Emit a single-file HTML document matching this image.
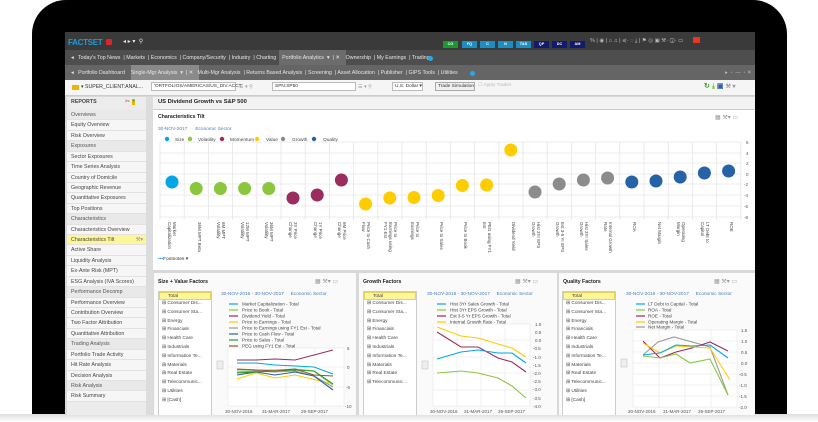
<!DOCTYPE html><html><head><meta charset="utf-8"><style>
*{margin:0;padding:0;box-sizing:border-box}
body{width:818px;height:422px;overflow:hidden;background:#fff;font-family:"Liberation Sans",sans-serif;position:relative}
.a{position:absolute;white-space:nowrap}
.t{font-size:5.2px;color:#333}
.w{color:#e6e6e6;font-size:5.3px}
.side div{height:10.43px;line-height:10.43px;font-size:5.3px;color:#444;padding-left:4px;border-bottom:1px solid #e2e2e2;background:#f6f6f6}
.side div.h{background:#e9e9e9;color:#555}
.side div.sel{background:#fdf59a}
.lst{position:absolute;background:#fff;border:1px solid #ccc}
.lst div{height:8.8px;line-height:8.8px;font-size:4.8px;color:#444;padding-left:3px}
.lst div.tot{background:#fdf59a;border:1px solid #e3d35a;padding-left:8px;height:8px;line-height:7px}
.pl{font-size:5.2px;font-weight:bold;color:#222}
.bl{color:#4a7cc0;font-size:4.8px}
.btn{position:absolute;top:41px;height:7px;width:15px;color:#fff;font-size:3.8px;text-align:center;line-height:7px;font-weight:bold}
</style></head><body>
<div class="a" style="left:32px;top:0;width:755px;height:416px;background:#000;border-radius:34px 34px 0 0"></div>
<div class="a" style="left:0;top:414px;width:818px;height:8px;background:linear-gradient(#ddd,#fff)"></div>
<div class="a" style="left:65px;top:32px;width:690px;height:383px;background:#d8d8d8;overflow:hidden">
 <div class="a" style="left:0;top:0;width:690px;height:18px;background:#3a3a3a"></div>
 <div class="a" style="left:3px;top:6px;font-size:8px;font-weight:bold;color:#1e9bd7;letter-spacing:-0.3px">FACTSET</div>
 <div class="a" style="left:41px;top:7px;width:6px;height:6px;background:#d9262c;border-radius:1px"></div>
 <div class="a w" style="left:58px;top:6px;font-size:6px">◂ ▸ ▾ &nbsp;⚲</div>
 <div class="a w" style="left:525px;top:6px;font-size:5.5px;color:#bbb">% | ◉ | ⌂ ♫ | ⋞· ◌ ⤓ | ⚑ ◎ ▣ ⚒· ⓘ· ▭</div>
 <div class="a" style="left:628px;top:5px;width:7px;height:6px;background:#e32;"></div>
 <div class="a" style="left:0;top:18px;width:690px;height:15px;background:#4e4e4e"></div>
 <div class="a" style="left:214px;top:18px;width:67px;height:15px;background:#6c6c6c"></div>
 <div class="a w" style="left:6px;top:23px">◂ &nbsp; Today's Top News &nbsp;| Markets &nbsp;| Economics &nbsp;| Company/Security &nbsp;| Industry &nbsp;| Charting &nbsp;&nbsp; Portfolio Analytics &nbsp;▾ &nbsp;| ✕ &nbsp;&nbsp; Ownership &nbsp;| My Earnings &nbsp;| Trading</div>
 <div class="a" style="left:363px;top:24px;width:5px;height:5px;border-radius:50%;background:#2aa7ea"></div>
 <div class="a" style="left:0;top:33px;width:690px;height:15px;background:#656565"></div>
 <div class="a" style="left:66px;top:33px;width:68px;height:15px;background:#8a8a8a"></div>
 <div class="a w" style="left:6px;top:38px">◂ &nbsp; Portfolio Dashboard &nbsp;&nbsp; Single-Mgr Analysis &nbsp;▾ &nbsp;| ✕ &nbsp; Multi-Mgr Analysis &nbsp;| Returns Based Analysis &nbsp;| Screening &nbsp;| Asset Allocation &nbsp;| Publisher &nbsp;| GIPS Tools &nbsp;| Utilities</div>
 <div class="a" style="left:405px;top:39px;width:5px;height:5px;border-radius:50%;background:#2aa7ea"></div>
 <div class="a w" style="left:660px;top:38px;color:#bbb">▸ &nbsp;▫ &nbsp;— &nbsp;▫ ✕</div>
 <div class="a" style="left:0;top:48px;width:690px;height:16px;background:#f5f5f5;border-bottom:1px solid #ccc"></div>
 <div class="a" style="left:7px;top:53px;width:7px;height:5px;background:#f0b400"></div>
 <div class="a t" style="left:16px;top:52px">▾ SUPER_CLIENT:ANAL...</div>
 <div class="a t" style="left:86px;top:50px;width:85px;height:9px;border:1px solid #bbb;background:#fff;padding:1px 2px;font-size:4.8px">'ORTFOLIOS/AMERICAS/US_DIV.ACCT</div>
 <div class="a t" style="left:174px;top:52px;color:#999">☰ ▾ ⚲</div>
 <div class="a t" style="left:207px;top:50px;width:84px;height:9px;border:1px solid #bbb;background:#fff;padding:1px 2px;font-size:4.8px">SPN:SP50</div>
 <div class="a t" style="left:293px;top:52px;color:#999">☰ ▾ ⚲</div>
 <div class="a t" style="left:327px;top:50px;width:31px;height:9px;border:1px solid #bbb;background:#fff;padding:1px 2px;font-size:4.8px">U.S. Dollar ▾</div>
 <div class="a t" style="left:370px;top:50px;width:40px;height:9px;border:1px solid #aaa;background:#f0f0f0;padding:1px 2px;font-size:4.8px">Trade Simulation</div>
 <div class="a t" style="left:413px;top:51px;color:#bbb;font-size:4.8px">☐ Apply Trades</div>
 <div class="a" style="left:639px;top:50px;font-size:7px;color:#3a9a2a;font-weight:bold">↻ <span style="color:#7cb82f">⤓</span> <span style="color:#2d5fa6">▣</span> <span style="color:#999;font-size:6px">⚒ ▾</span></div>
 <div class="a" style="left:2px;top:65px;width:79px;height:318px;background:#ececec"></div>
 <div class="a" style="left:81px;top:65px;width:7px;height:318px;background:#dcdcdc"></div>
 <div class="a" style="left:6px;top:67px;font-size:5.3px;color:#444;font-weight:bold">REPORTS</div>
 <div class="a" style="left:60px;top:66px;font-size:6px;color:#c44">✂ <span style="background:#e8b800;color:#3a3">+</span></div>
 <div class="a side" style="left:2px;top:78px;width:79px">
  <div class="h">Overviews</div><div>Equity Overview</div><div>Risk Overview</div>
  <div class="h">Exposures</div><div>Sector Exposures</div><div>Time Series Analysis</div><div>Country of Domicile</div><div>Geographic Revenue</div><div>Quantitative Exposures</div><div>Top Positions</div>
  <div class="h">Characteristics</div><div>Characteristics Overview</div><div class="sel">Characteristics Tilt <span style="float:right;padding-right:3px;color:#999">⚒▾</span></div><div>Active Share</div><div>Liquidity Analysis</div><div>Ex-Ante Risk (MPT)</div><div>ESG Analysis (IVA Scores)</div>
  <div class="h">Performance Decomp</div><div>Performance Overview</div><div>Contribution Overview</div><div>Two Factor Attribution</div><div>Quantitative Attribution</div>
  <div class="h">Trading Analysis</div><div>Portfolio Trade Activity</div><div>Hit Rate Analysis</div><div>Decision Analysis</div>
  <div class="h">Risk Analysis</div><div>Risk Summary</div>
 </div>
 <div class="a" style="left:88px;top:65px;width:602px;height:13px;background:#f2f2f2;border-bottom:1px solid #ccc"></div>
 <div class="a pl" style="left:93px;top:67px;font-size:5.8px">US Dividend Growth vs S&amp;P 500</div>
 <div class="a" style="left:88px;top:78px;width:602px;height:160px;background:#fff"></div>
 <div class="a pl" style="left:93px;top:82px">Characteristics Tilt</div>
 <div class="a bl" style="left:93px;top:95px">30-NOV-2017 &nbsp;&nbsp;&nbsp;&nbsp; Economic Sector</div>
 <div class="a t" style="left:650px;top:82px;color:#999;font-size:6px">▦ ⚒▾ ▭</div>
 <div class="a t" style="left:93px;top:225px;font-size:4.8px"><span style="color:#2a8ae0">•••</span>Footnotes ▾</div>
 <div class="a" style="left:89px;top:241px;width:202px;height:142px;background:#fafafa"></div>
 <div class="a" style="left:294px;top:241px;width:198px;height:142px;background:#fafafa"></div>
 <div class="a" style="left:494px;top:241px;width:196px;height:142px;background:#fafafa"></div>
 <div class="a pl" style="left:93px;top:247px">Size + Value Factors</div>
 <div class="a pl" style="left:298px;top:247px">Growth Factors</div>
 <div class="a pl" style="left:498px;top:247px">Quality Factors</div>
 <div class="a t" style="left:250px;top:246px;color:#999;font-size:6px">▦ ⚒▾ ▭</div>
 <div class="a t" style="left:450px;top:246px;color:#999;font-size:6px">▦ ⚒▾ ▭</div>
 <div class="a t" style="left:649px;top:246px;color:#999;font-size:6px">▦ ⚒▾ ▭</div>
 <div class="a bl" style="left:156px;top:260px">30-NOV-2016 - 30-NOV-2017 &nbsp;&nbsp;&nbsp; Economic Sector</div>
 <div class="a bl" style="left:362px;top:260px">30-NOV-2016 - 30-NOV-2017 &nbsp;&nbsp;&nbsp; Economic Sector</div>
 <div class="a bl" style="left:561px;top:260px">30-NOV-2016 - 30-NOV-2017 &nbsp;&nbsp;&nbsp; Economic Sector</div>
 <div class="lst" style="left:93px;top:259px;width:54px;height:125px"><div class="tot">Total</div><div>⊞ Consumer Dis...</div><div>⊞ Consumer Sta...</div><div>⊞ Energy</div><div>⊞ Financials</div><div>⊞ Health Care</div><div>⊞ Industrials</div><div>⊞ Information Te...</div><div>⊞ Materials</div><div>⊞ Real Estate</div><div>⊞ Telecommunic...</div><div>⊞ Utilities</div><div>⊞ [Cash]</div></div>
 <div class="lst" style="left:298px;top:259px;width:54px;height:125px"><div class="tot">Total</div><div>⊞ Consumer Dis...</div><div>⊞ Consumer Sta...</div><div>⊞ Energy</div><div>⊞ Financials</div><div>⊞ Health Care</div><div>⊞ Industrials</div><div>⊞ Information Te...</div><div>⊞ Materials</div><div>⊞ Real Estate</div><div>⊞ Telecommunic...</div></div>
 <div class="lst" style="left:497px;top:259px;width:54px;height:125px"><div class="tot">Total</div><div>⊞ Consumer Dis...</div><div>⊞ Consumer Sta...</div><div>⊞ Energy</div><div>⊞ Financials</div><div>⊞ Health Care</div><div>⊞ Industrials</div><div>⊞ Information Te...</div><div>⊞ Materials</div><div>⊞ Real Estate</div><div>⊞ Telecommunic...</div><div>⊞ Utilities</div><div>⊞ [Cash]</div></div>
</div>
<svg class="a" style="left:0;top:0" width="818" height="422" font-family="Liberation Sans,sans-serif">
 <g font-size="4.8" fill="#444">
  <circle cx="167" cy="139" r="2.2" fill="#00a6e8"/><text x="175" y="141">Size</text>
  <circle cx="190" cy="139" r="2.2" fill="#8cc63f"/><text x="198" y="141">Volatility</text>
  <circle cx="222" cy="139" r="2.2" fill="#9b2c5e"/><text x="230" y="141">Momentum</text>
  <circle cx="257" cy="139" r="2.2" fill="#ffcc00"/><text x="266" y="141">Value</text>
  <circle cx="283" cy="139" r="2.2" fill="#8c8c8c"/><text x="292" y="141">Growth</text>
  <circle cx="314" cy="139" r="2.2" fill="#2563a6"/><text x="323" y="141">Quality</text>
 </g>
 <g stroke="#e6e6e6" stroke-width="0.8">
  <path d="M160 142H742M160 153H742M160 163H742M160 174H742M160 184H742M160 195H742M160 206H742M160 217H742"/>
  <path d="M160 142V220M184.2 142V220M208.4 142V220M232.6 142V220M256.8 142V220M281 142V220M305.2 142V220M329.4 142V220M353.6 142V220M377.8 142V220M402 142V220M426.2 142V220M450.4 142V220M474.6 142V220M498.8 142V220M523 142V220M547.2 142V220M571.4 142V220M595.6 142V220M619.8 142V220M644 142V220M668.2 142V220M692.4 142V220M716.6 142V220M740.8 142V220"/>
 </g>
 <g font-size="4.5" fill="#555"><text x="746" y="144">6</text><text x="746" y="155">4</text><text x="746" y="165">2</text><text x="746" y="176">0</text><text x="744" y="186">-2</text><text x="744" y="197">-4</text><text x="744" y="208">-6</text><text x="744" y="219">-8</text></g>
 <g>
  <circle cx="172" cy="182" r="6.5" fill="#00a6e8"/>
  <g fill="#8cc63f"><circle cx="196.2" cy="188.5" r="6.5"/><circle cx="220.4" cy="188.5" r="6.5"/><circle cx="244.6" cy="188.5" r="6.5"/><circle cx="268.8" cy="188.5" r="6.5"/></g>
  <g fill="#9b2c5e"><circle cx="293" cy="198" r="6.5"/><circle cx="317.2" cy="195" r="6.5"/><circle cx="341.4" cy="180" r="6.5"/></g>
  <g fill="#ffcc00"><circle cx="365.6" cy="204" r="6.5"/><circle cx="389.8" cy="198" r="6.5"/><circle cx="414" cy="197.5" r="6.5"/><circle cx="438.2" cy="195.5" r="6.5"/><circle cx="462.4" cy="185.5" r="6.5"/><circle cx="486.6" cy="185" r="6.5"/><circle cx="510.8" cy="150" r="6.5"/></g>
  <g fill="#8c8c8c"><circle cx="535" cy="192" r="6.5"/><circle cx="559.2" cy="184" r="6.5"/><circle cx="583.4" cy="180" r="6.5"/><circle cx="607.6" cy="178" r="6.5"/></g>
  <g fill="#2563a6"><circle cx="631.8" cy="182" r="6.5"/><circle cx="656" cy="181" r="6.5"/><circle cx="680.2" cy="177" r="6.5"/><circle cx="704.4" cy="173" r="6.5"/><circle cx="728.6" cy="171" r="6.5"/></g>
 </g>
 <g font-size="4.5" fill="#444">
  <text transform="translate(173,222) rotate(90)">Market<tspan x="0" dy="5">Capitalization</tspan></text>
  <text transform="translate(198,222) rotate(90)">36M MPT Beta</text>
  <text transform="translate(222,222) rotate(90)">6M MPT<tspan x="0" dy="5">Volatility</tspan></text>
  <text transform="translate(246,222) rotate(90)">12M MPT<tspan x="0" dy="5">Volatility</tspan></text>
  <text transform="translate(270,222) rotate(90)">36M MPT<tspan x="0" dy="5">Volatility</tspan></text>
  <text transform="translate(294,222) rotate(90)">3Y Price<tspan x="0" dy="5">Change</tspan></text>
  <text transform="translate(319,222) rotate(90)">1Y Price<tspan x="0" dy="5">Change</tspan></text>
  <text transform="translate(343,222) rotate(90)">6M Price<tspan x="0" dy="5">Change</tspan></text>
  <text transform="translate(367,222) rotate(90)">Price to Cash<tspan x="0" dy="5">Flow</tspan></text>
  <text transform="translate(394,222) rotate(90)">Price to<tspan x="0" dy="5">Earnings using</tspan><tspan x="0" dy="5">FY1 Est</tspan></text>
  <text transform="translate(416,222) rotate(90)">Price to<tspan x="0" dy="5">Earnings</tspan></text>
  <text transform="translate(440,222) rotate(90)">Price to Sales</text>
  <text transform="translate(464,222) rotate(90)">Price to Book</text>
  <text transform="translate(488,222) rotate(90)">PEG using FY1<tspan x="0" dy="5">Est</tspan></text>
  <text transform="translate(512,222) rotate(90)">Dividend Yield</text>
  <text transform="translate(537,222) rotate(90)">Hist 3Yr EPS<tspan x="0" dy="5">Growth</tspan></text>
  <text transform="translate(561,222) rotate(90)">Est 3-5 Yr EPS<tspan x="0" dy="5">Growth</tspan></text>
  <text transform="translate(585,222) rotate(90)">Hist 3Yr Sales<tspan x="0" dy="5">Growth</tspan></text>
  <text transform="translate(609,222) rotate(90)">Internal Growth<tspan x="0" dy="5">Rate</tspan></text>
  <text transform="translate(633,222) rotate(90)">ROA</text>
  <text transform="translate(658,222) rotate(90)">Net Margin</text>
  <text transform="translate(682,222) rotate(90)">Operating<tspan x="0" dy="5">Margin</tspan></text>
  <text transform="translate(706,222) rotate(90)">LT Debt to<tspan x="0" dy="5">Capital</tspan></text>
  <text transform="translate(730,222) rotate(90)">ROE</text>
 </g>
 <g fill="#eee" stroke="#bbb" stroke-width="0.5"><rect x="217" y="361" width="6" height="8"/><rect x="422" y="361" width="6" height="8"/><rect x="621" y="359" width="6" height="8"/></g>
 <g stroke="#e6e6e6" stroke-width="0.6" fill="none"><rect x="228" y="348" width="116" height="58" fill="#fff"/><path d="M228 367H344M228 387H344M257 348V406M286 348V406M315 348V406"/></g>
 <g font-size="4.5" fill="#555"><text x="347" y="350">5</text><text x="347" y="369">0</text><text x="346" y="389">-5</text><text x="345" y="408">-10</text><text x="225" y="413">30-NOV-2016</text><text x="262" y="413">31-MAR-2017</text><text x="301" y="413">29-SEP-2017</text></g>
 <g fill="none" stroke-width="1.1">
  <path stroke="#9b2c5e" d="M237 360L256 360L275 359L295 360L333 350"/>
  <path stroke="#00a6e8" d="M237 363L256 363L275 365L295 366L314 367L333 374"/>
  <path stroke="#8cc63f" d="M237 370L256 370L275 370L295 369L314 371L333 385"/>
  <path stroke="#ffcc00" d="M237 379L256 373L275 378L295 375L333 384"/>
  <path stroke="#999" d="M237 372L256 371L275 372L295 371L314 376L333 387"/>
  <path stroke="#2563a6" d="M237 375L256 372L275 375L295 372L314 376L333 390"/>
  <path stroke="#2a9a2a" d="M237 373L256 372L275 371L295 370L314 371L333 384"/>
  <path stroke="#8b5a2b" d="M237 369L256 370L275 371L295 369L314 375L333 376"/>
 </g>
 <g font-size="4.6" fill="#444" stroke-width="1.2">
  <path stroke="#00a6e8" d="M229 304H238"/><text x="242" y="305.5">Market Capitalization - Total</text>
  <path stroke="#8cc63f" d="M229 310H238"/><text x="242" y="311.5">Price to Book - Total</text>
  <path stroke="#9b2c5e" d="M229 316H238"/><text x="242" y="317.5">Dividend Yield - Total</text>
  <path stroke="#ffcc00" d="M229 322H238"/><text x="242" y="323.5">Price to Earnings - Total</text>
  <path stroke="#999" d="M229 328H238"/><text x="242" y="329.5">Price to Earnings using FY1 Est - Total</text>
  <path stroke="#2563a6" d="M229 334H238"/><text x="242" y="335.5">Price to Cash Flow - Total</text>
  <path stroke="#2a9a2a" d="M229 340H238"/><text x="242" y="341.5">Price to Sales - Total</text>
  <path stroke="#8b5a2b" d="M229 346H238"/><text x="242" y="347.5">PEG using FY1 Est - Total</text>
 </g>
 <g stroke="#e6e6e6" stroke-width="0.6" fill="none"><rect x="433" y="324" width="97" height="82" fill="#fff"/><path d="M433 340H530M433 357H530M433 373H530M433 390H530M457 324V406M481 324V406M505 324V406"/></g>
 <g font-size="4.5" fill="#555"><text x="535" y="326">1.0</text><text x="535" y="334">0.5</text><text x="535" y="342">0.0</text><text x="533" y="350">-0.5</text><text x="533" y="359">-1.0</text><text x="533" y="367">-1.5</text><text x="533" y="375">-2.0</text><text x="533" y="383">-2.5</text><text x="533" y="391">-3.0</text><text x="533" y="400">-3.5</text><text x="533" y="408">-4.0</text><text x="430" y="413">30-NOV-2016</text><text x="464" y="413">31-MAR-2017</text><text x="498" y="413">29-SEP-2017</text></g>
 <g fill="none" stroke-width="1.1">
  <path stroke="#ffcc00" d="M437 327L461 336L478 338L498 344L512 348L526 357"/>
  <path stroke="#9b2c5e" d="M437 332L461 347L478 347L498 358L512 362L526 372"/>
  <path stroke="#00a6e8" d="M437 359L461 352L478 350L498 353L512 353L526 363"/>
  <path stroke="#8cc63f" d="M437 373L461 371L478 373L498 378L512 386L526 398"/>
 </g>
 <g font-size="4.6" fill="#444" stroke-width="1.2">
  <path stroke="#00a6e8" d="M437 304H446"/><text x="450" y="305.5">Hist 3Yr Sales Growth - Total</text>
  <path stroke="#8cc63f" d="M437 310H446"/><text x="450" y="311.5">Hist 3Yr EPS Growth - Total</text>
  <path stroke="#9b2c5e" d="M437 316H446"/><text x="450" y="317.5">Est 3-5 Yr EPS Growth - Total</text>
  <path stroke="#ffcc00" d="M437 322H446"/><text x="450" y="323.5">Internal Growth Rate - Total</text>
 </g>
 <g stroke="#e6e6e6" stroke-width="0.6" fill="none"><rect x="633" y="330" width="104" height="77" fill="#fff"/><path d="M633 341H737M633 352H737M633 363H737M633 374H737M633 385H737M633 396H737M659 330V407M685 330V407M711 330V407"/></g>
 <g font-size="4.5" fill="#555"><text x="741" y="332">1.5</text><text x="741" y="343">1.0</text><text x="741" y="354">0.5</text><text x="741" y="365">0.0</text><text x="739" y="376">-0.5</text><text x="739" y="387">-1.0</text><text x="739" y="398">-1.5</text><text x="739" y="409">-2.0</text><text x="628" y="413">30-NOV-2016</text><text x="663" y="413">31-MAR-2017</text><text x="698" y="413">29-SEP-2017</text></g>
 <g fill="none" stroke-width="1.1">
  <path stroke="#999" d="M643 355L658 342L674 337L710 347L728 395"/>
  <path stroke="#9b2c5e" d="M643 341L660 358L676 352L692 348L710 342L728 351"/>
  <path stroke="#ffcc00" d="M643 343L660 353L676 346L710 348L730 380"/>
  <path stroke="#00a6e8" d="M643 355L660 353L676 345L692 346L710 345L728 358"/>
  <path stroke="#8cc63f" d="M643 356L660 358L676 354L690 363L710 359L728 395"/>
 </g>
 <g font-size="4.6" fill="#444" stroke-width="1.2">
  <path stroke="#00a6e8" d="M636 304H645"/><text x="648" y="305.5">LT Debt to Capital - Total</text>
  <path stroke="#8cc63f" d="M636 310H645"/><text x="648" y="311.5">ROA - Total</text>
  <path stroke="#9b2c5e" d="M636 316H645"/><text x="648" y="317.5">ROE - Total</text>
  <path stroke="#ffcc00" d="M636 322H645"/><text x="648" y="323.5">Operating Margin - Total</text>
  <path stroke="#999" d="M636 327H645"/><text x="648" y="328.5">Net Margin - Total</text>
 </g>
</svg>
<div class="btn" style="left:443px;background:#1a9a2a">CG</div>
<div class="btn" style="left:462px;background:#1a8fc4">FQ</div>
<div class="btn" style="left:480px;background:#1a8fc4">C</div>
<div class="btn" style="left:498px;background:#1a8fc4">N</div>
<div class="btn" style="left:516px;background:#1a8fc4">T&amp;S</div>
<div class="btn" style="left:534px;background:#101a6e">QP</div>
<div class="btn" style="left:552px;background:#101a6e">DC</div>
<div class="btn" style="left:570px;background:#101a6e">AM</div>
</body></html>
